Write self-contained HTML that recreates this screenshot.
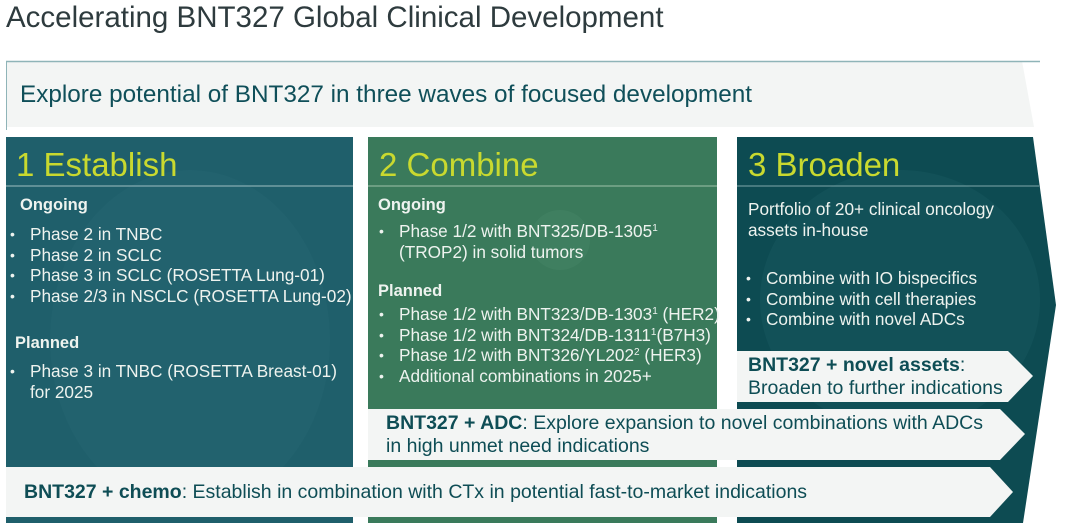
<!DOCTYPE html>
<html><head><meta charset="utf-8"><style>
*{margin:0;padding:0;box-sizing:border-box}
body{width:1080px;height:529px;background:#fff;position:relative;overflow:hidden;font-family:"Liberation Sans",Arial,sans-serif}
.a{position:absolute;white-space:nowrap}
.t{color:#eef3ef;font-size:17.2px;line-height:20.5px}
.h{color:#c9d92f;font-size:33px}
.b{font-weight:bold;font-size:16.5px}
.d{color:#0e4d55;font-size:19.5px;line-height:23px}
ul{list-style:none}
ul li:before{content:"•";position:absolute;margin-left:-20px;font-size:14px}
sup{font-size:10px;line-height:0;vertical-align:6px}
</style></head><body>
<div class="a" style="left:6px;top:1px;font-size:29.5px;color:#2e3b3e">Accelerating BNT327 Global Clinical Development</div>
<svg class="a" style="left:0;top:0" width="1080" height="529">
<polygon points="6,61 1022,61 1034,127 6,127" fill="#f3f5f4"/>
<line x1="6" y1="61.5" x2="1040" y2="61.5" stroke="#8fb4b8" stroke-width="1.5"/>
<line x1="6.5" y1="61" x2="6.5" y2="130" stroke="#8fb4b8" stroke-width="1"/>
<rect x="6" y="137" width="347" height="386" fill="#1f5f6b"/>
<ellipse cx="190" cy="340" rx="140" ry="170" fill="#2a6d76" opacity=".25"/>
<rect x="368" y="137" width="349" height="386" fill="#3a7a5b"/>
<circle cx="560" cy="240" r="30" fill="#4b8a6a" opacity=".35"/>
<polygon points="737,137 1033,137 1056,305 1023,523 737,523" fill="#0d4b52"/>
<ellipse cx="900" cy="300" rx="140" ry="130" fill="#1e5f63" opacity=".35"/>
<line x1="6" y1="186" x2="353" y2="186" stroke="#9fbfc2" stroke-width="1"/>
<line x1="368" y1="186" x2="717" y2="186" stroke="#9fc2a9" stroke-width="1"/>
<line x1="737" y1="186" x2="1039" y2="186" stroke="#7ea7aa" stroke-width="1"/>
<polygon points="737,351 1008,351 1033,376 1008,402 737,402" fill="#f3f5f4"/>
<polygon points="368,409 1000,409 1025,434 1000,460 368,460" fill="#f3f5f4"/>
<polygon points="6,467 990,467 1013,492 990,517 6,517" fill="#f3f5f4"/>
</svg>
<div class="a" style="left:20px;top:81px;font-size:24.3px;color:#0f4f59">Explore potential of BNT327 in three waves of focused development</div>

<div class="a h" style="left:16px;top:146px">1 Establish</div>
<div class="a t b" style="left:20px;top:195px">Ongoing</div>
<ul class="a t" style="left:30px;top:224px"><li>Phase 2 in TNBC</li><li>Phase 2 in SCLC</li><li>Phase 3 in SCLC (ROSETTA Lung-01)</li><li>Phase 2/3 in NSCLC (ROSETTA Lung-02)</li></ul>
<div class="a t b" style="left:15px;top:333px">Planned</div>
<ul class="a t" style="left:30px;top:361px"><li>Phase 3 in TNBC (ROSETTA Breast-01)<br>for 2025</li></ul>

<div class="a h" style="left:379px;top:146px">2 Combine</div>
<div class="a t b" style="left:378px;top:195px">Ongoing</div>
<ul class="a t" style="left:399px;top:221px"><li>Phase 1/2 with BNT325/DB-1305<sup>1</sup><br>(TROP2) in solid tumors</li></ul>
<div class="a t b" style="left:378px;top:281px">Planned</div>
<ul class="a t" style="left:399px;top:304px"><li>Phase 1/2 with BNT323/DB-1303<sup>1</sup> (HER2)</li><li>Phase 1/2 with BNT324/DB-1311<sup>1</sup>(B7H3)</li><li>Phase 1/2 with BNT326/YL202<sup>2</sup> (HER3)</li><li>Additional combinations in 2025+</li></ul>

<div class="a h" style="left:748px;top:146px">3 Broaden</div>
<div class="a t" style="left:748px;top:199px">Portfolio of 20+ clinical oncology<br>assets in-house</div>
<ul class="a t" style="left:766px;top:268px"><li>Combine with IO bispecifics</li><li>Combine with cell therapies</li><li>Combine with novel ADCs</li></ul>

<div class="a d" style="left:748px;top:354px"><b>BNT327 + novel assets</b>:<br>Broaden to further indications</div>
<div class="a d" style="left:386px;top:412px"><b>BNT327 + ADC</b>: Explore expansion to novel combinations with ADCs<br>in high unmet need indications</div>
<div class="a d" style="left:24px;top:481px"><b>BNT327 + chemo</b>: Establish in combination with CTx in potential fast-to-market indications</div>
</body></html>
